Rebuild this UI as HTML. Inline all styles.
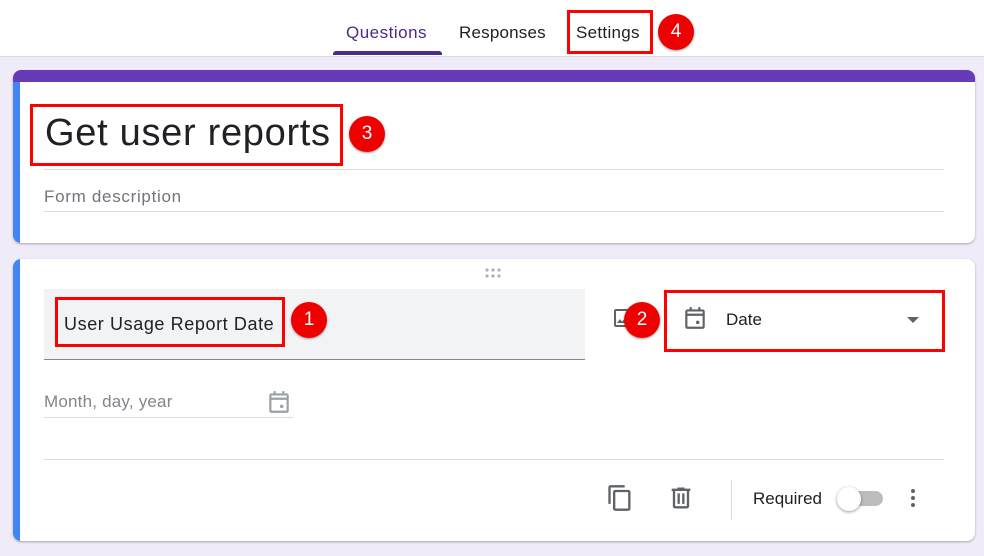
<!DOCTYPE html><html><head><style>
body{margin:0;width:984px;height:556px;background:#f0ebf8;font-family:"Liberation Sans",sans-serif;position:relative;overflow:hidden}
.a{position:absolute}
.red{position:absolute;border:3px solid #f00;box-sizing:border-box}
.badge{position:absolute;width:36px;height:36px;border-radius:50%;background:#e00;color:#fff;font-size:19px;text-align:center;line-height:36px;box-shadow:0 1px 2px rgba(0,0,0,.4)}
</style></head><body>
<div class="a" style="left:0;top:0;width:984px;height:56px;background:#fff;border-bottom:1px solid #dadce0"></div>
<div class="a" style="left:346px;top:23px;font-size:17px;color:#4a2a8a;letter-spacing:0.5px">Questions</div>
<div class="a" style="left:333px;top:51px;width:109px;height:4px;background:#4a2a8a;border-radius:3px 3px 0 0"></div>
<div class="a" style="left:459px;top:23px;font-size:17px;color:#202124;letter-spacing:0.2px">Responses</div>
<div class="a" style="left:576px;top:23px;font-size:17px;color:#202124;letter-spacing:0.3px">Settings</div>
<div class="red" style="left:567px;top:10px;width:86px;height:44px"></div>
<div class="badge" style="left:658px;top:14px">4</div>

<div class="a" style="left:13px;top:70px;width:962px;height:173px;background:#fff;border-radius:8px;box-shadow:0 1px 2px rgba(0,0,0,.3);overflow:hidden">
<div class="a" style="left:0;top:0;width:962px;height:12px;background:#673ab7"></div>
<div class="a" style="left:0;top:12px;width:7px;height:161px;background:#4285f4"></div>
</div>
<div class="a" style="left:45px;top:112px;font-size:38px;color:#202124;letter-spacing:0.7px">Get user reports</div>
<div class="red" style="left:30px;top:104px;width:313px;height:62px"></div>
<div class="badge" style="left:349px;top:116px">3</div>
<div class="a" style="left:44px;top:169px;width:900px;height:1px;background:#dadce0"></div>
<div class="a" style="left:44px;top:187px;font-size:17px;color:#70757a;letter-spacing:0.7px">Form description</div>
<div class="a" style="left:44px;top:211px;width:900px;height:1px;background:#dadce0"></div>

<div class="a" style="left:13px;top:259px;width:962px;height:282px;background:#fff;border-radius:8px;box-shadow:0 1px 2px rgba(0,0,0,.3);overflow:hidden">
<div class="a" style="left:0;top:0;width:7px;height:282px;background:#4285f4"></div>
</div>
<svg class="a" style="left:484px;top:267px" width="20" height="12"><g fill="#b0b0b0"><circle cx="3" cy="3" r="1.6"/><circle cx="9" cy="3" r="1.6"/><circle cx="15" cy="3" r="1.6"/><circle cx="3" cy="9" r="1.6"/><circle cx="9" cy="9" r="1.6"/><circle cx="15" cy="9" r="1.6"/></g></svg>
<div class="a" style="left:44px;top:289px;width:541px;height:70px;background:#f1f3f4;border-bottom:1px solid #80868b"></div>
<div class="a" style="left:64px;top:314px;font-size:18px;color:#202124;letter-spacing:0.6px">User Usage Report Date</div>
<div class="red" style="left:55px;top:297px;width:230px;height:50px"></div>
<div class="badge" style="left:291px;top:302px">1</div>
<svg class="a" style="left:611px;top:306px" width="24" height="24" viewBox="0 0 24 24"><path fill="#5f6368" d="M19 5v14H5V5h14m0-2H5c-1.1 0-2 .9-2 2v14c0 1.1.9 2 2 2h14c1.1 0 2-.9 2-2V5c0-1.1-.9-2-2-2zm-4.86 8.86l-3 3.87L9 13.14 6 17h12l-3.86-5.14z"/></svg>
<div class="badge" style="left:624px;top:302px">2</div>
<svg class="a" style="left:682px;top:305px" width="26" height="26" viewBox="0 0 24 24"><path fill="none" stroke="#5f6368" stroke-width="2" d="M5 5h14a1 1 0 0 1 1 1v14a1 1 0 0 1-1 1H5a1 1 0 0 1-1-1V6a1 1 0 0 1 1-1zM4 9h16M8 2v4M16 2v4"/><circle cx="14.5" cy="16" r="1.6" fill="#5f6368"/></svg>
<div class="a" style="left:726px;top:310px;font-size:17px;color:#202124">Date</div>
<div class="a" style="left:907px;top:317px;width:0;height:0;border-left:6px solid transparent;border-right:6px solid transparent;border-top:6px solid #5f6368"></div>
<div class="red" style="left:664px;top:290px;width:281px;height:62px"></div>
<div class="a" style="left:44px;top:392px;font-size:17px;color:#80868b;letter-spacing:0.2px">Month, day, year</div>
<svg class="a" style="left:266px;top:389px" width="26" height="26" viewBox="0 0 24 24"><path fill="none" stroke="#9aa0a6" stroke-width="2" d="M5 5h14a1 1 0 0 1 1 1v14a1 1 0 0 1-1 1H5a1 1 0 0 1-1-1V6a1 1 0 0 1 1-1zM4 9h16M8 2v4M16 2v4"/><circle cx="14.5" cy="16" r="1.6" fill="#9aa0a6"/></svg>
<div class="a" style="left:44px;top:417px;width:250px;height:1px;background:#dadce0"></div>
<div class="a" style="left:44px;top:459px;width:900px;height:1px;background:#dadce0"></div>
<svg class="a" style="left:606px;top:484px" width="28" height="28" viewBox="0 0 24 24"><path fill="#5f6368" d="M16 1H4c-1.1 0-2 .9-2 2v14h2V3h12V1zm3 4H8c-1.1 0-2 .9-2 2v14c0 1.1.9 2 2 2h11c1.1 0 2-.9 2-2V7c0-1.1-.9-2-2-2zm0 16H8V7h11v14z"/></svg>
<svg class="a" style="left:667px;top:484px" width="28" height="28" viewBox="0 0 24 24"><path fill="#5f6368" d="M15 4V3H9v1H4v2h1v13c0 1.1.9 2 2 2h10c1.1 0 2-.9 2-2V6h1V4h-5zm2 15H7V6h10v13zM9 8h2v9H9zm4 0h2v9h-2z"/></svg>
<div class="a" style="left:731px;top:480px;width:1px;height:40px;background:#dadce0"></div>
<div class="a" style="left:753px;top:489px;font-size:17px;color:#202124">Required</div>
<div class="a" style="left:841px;top:491px;width:42px;height:15px;border-radius:8px;background:#bdbdbd"></div>
<div class="a" style="left:837px;top:487px;width:24px;height:24px;border-radius:50%;background:#fff;box-shadow:0 1px 3px rgba(0,0,0,.4)"></div>
<svg class="a" style="left:901px;top:486px" width="24" height="24" viewBox="0 0 24 24"><circle cx="12" cy="5" r="2" fill="#5f6368"/><circle cx="12" cy="12" r="2" fill="#5f6368"/><circle cx="12" cy="19" r="2" fill="#5f6368"/></svg>
</body></html>
